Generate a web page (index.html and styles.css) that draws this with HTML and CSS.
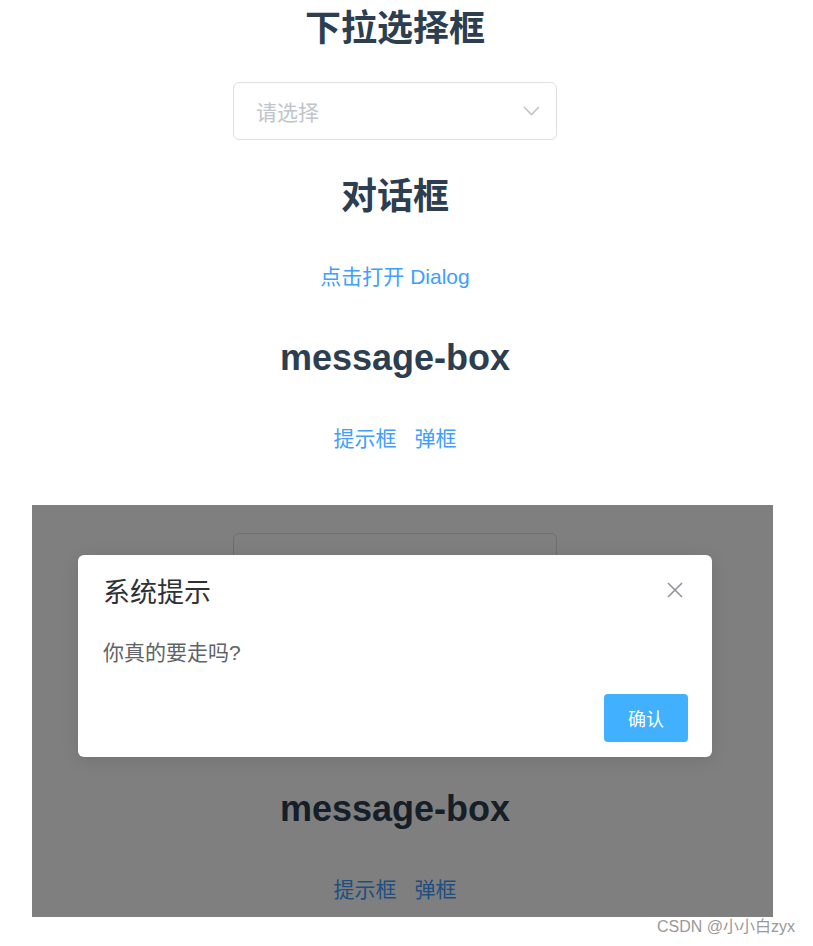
FILE: index.html
```html
<!DOCTYPE html>
<html lang="zh-CN">
<head>
<meta charset="utf-8">
<title>Element UI demo</title>
<link rel="stylesheet" href="styles.css">
</head>
<body>
<div class="col">
  <h2 class="title t1">下拉选择框</h2>
  <div class="select">
    <span class="placeholder">请选择</span>
    <svg class="chev" width="17" height="10" viewBox="0 0 17 10"><polyline points="1,1 8.5,8.5 16,1" fill="none" stroke="#c0c4cc" stroke-width="1.6"/></svg>
  </div>
  <h2 class="title t2">对话框</h2>
  <div class="link l1">点击打开 Dialog</div>
  <h2 class="title t3">message-box</h2>
  <div class="links"><span>提示框</span><span>弹框</span></div>
</div>

<div class="shot">
  <div class="col inner">
    <div class="select select-top">
      <span class="placeholder"></span>
      <svg class="chev" width="17" height="10" viewBox="0 0 17 10"><polyline points="1,1 8.5,8.5 16,1" fill="none" stroke="#c0c4cc" stroke-width="1.6"/></svg>
    </div>
    <h2 class="title t2">对话框</h2>
    <div class="link l1">点击打开 Dialog</div>
    <h2 class="title t3">message-box</h2>
    <div class="links"><span>提示框</span><span>弹框</span></div>
  </div>
  <div class="mask"></div>
  <div class="msgbox">
    <div class="mb-header">系统提示</div>
    <svg class="close" width="16" height="16" viewBox="0 0 16 16"><path d="M1 1 L15 15 M15 1 L1 15" stroke="#909399" stroke-width="1.6" fill="none"/></svg>
    <div class="mb-content">你真的要走吗?</div>
    <div class="mb-btns"><button class="btn">确认</button></div>
  </div>
</div>

<div class="watermark">CSDN @小小白zyx</div>
</body>
</html>
```

FILE: styles.css
```css
html, body {
  margin: 0;
  padding: 0;
  background: #ffffff;
}
body {
  width: 813px;
  font-family: "Liberation Sans", "Noto Sans CJK SC", sans-serif;
}
.col {
  width: 790px;
  display: flex;
  flex-direction: column;
  align-items: center;
  text-align: center;
}
.title {
  margin: 0;
  font-size: 36px;
  line-height: 48px;
  font-weight: bold;
  color: #2c3e50;
}
.t1 { margin-top: 5px; }
.t2 { margin-top: 33px; }
.t3 { margin-top: 42px; }
.select {
  margin-top: 29px;
  box-sizing: border-box;
  width: 324px;
  height: 58px;
  border: 1.5px solid #dcdfe6;
  border-radius: 6px;
  display: flex;
  align-items: center;
  justify-content: space-between;
  padding: 0 16px 0 22px;
  background: #fff;
}
.select-top { margin-top: 28px; }
.placeholder {
  font-size: 21px;
  color: #c0c4cc;
}
.link {
  font-size: 21px;
  line-height: 30px;
  color: #409eff;
}
.l1 { margin-top: 41px; }
.links {
  margin-top: 42px;
  display: flex;
  gap: 18px;
  font-size: 21px;
  line-height: 30px;
  color: #409eff;
}
.shot {
  position: relative;
  margin: 51px 0 0 32px;
  width: 741px;
  height: 412px;
  overflow: hidden;
  background: #fff;
}
.inner {
  margin-left: -32px;
}
.mask {
  position: absolute;
  inset: 0;
  background: rgba(0, 0, 0, 0.5);
}
.msgbox {
  position: absolute;
  left: 46px;
  top: 50px;
  width: 634px;
  box-sizing: border-box;
  background: #fff;
  border-radius: 6px;
  box-shadow: 0 3px 18px rgba(0, 0, 0, 0.1);
  padding-bottom: 15px;
}
.mb-header {
  padding: 25px 25px 13px;
  font-size: 27px;
  line-height: 27px;
  color: #303133;
  text-align: left;
}
.close {
  position: absolute;
  top: 27px;
  right: 29px;
}
.mb-content {
  padding: 15px 25px;
  font-size: 21px;
  line-height: 36px;
  color: #606266;
  text-align: left;
}
.mb-btns {
  padding: 8px 24px 0;
  display: flex;
  justify-content: flex-end;
}
.btn {
  width: 84px;
  height: 48px;
  border: none;
  border-radius: 4px;
  background: #40b0ff;
  color: #fff;
  font-family: "Liberation Sans", "Noto Sans CJK SC", sans-serif;
  font-size: 18px;
  padding: 0;
}
.watermark {
  text-align: right;
  padding-right: 18px;
  font-size: 16px;
  line-height: 20px;
  color: #999;
}
```
